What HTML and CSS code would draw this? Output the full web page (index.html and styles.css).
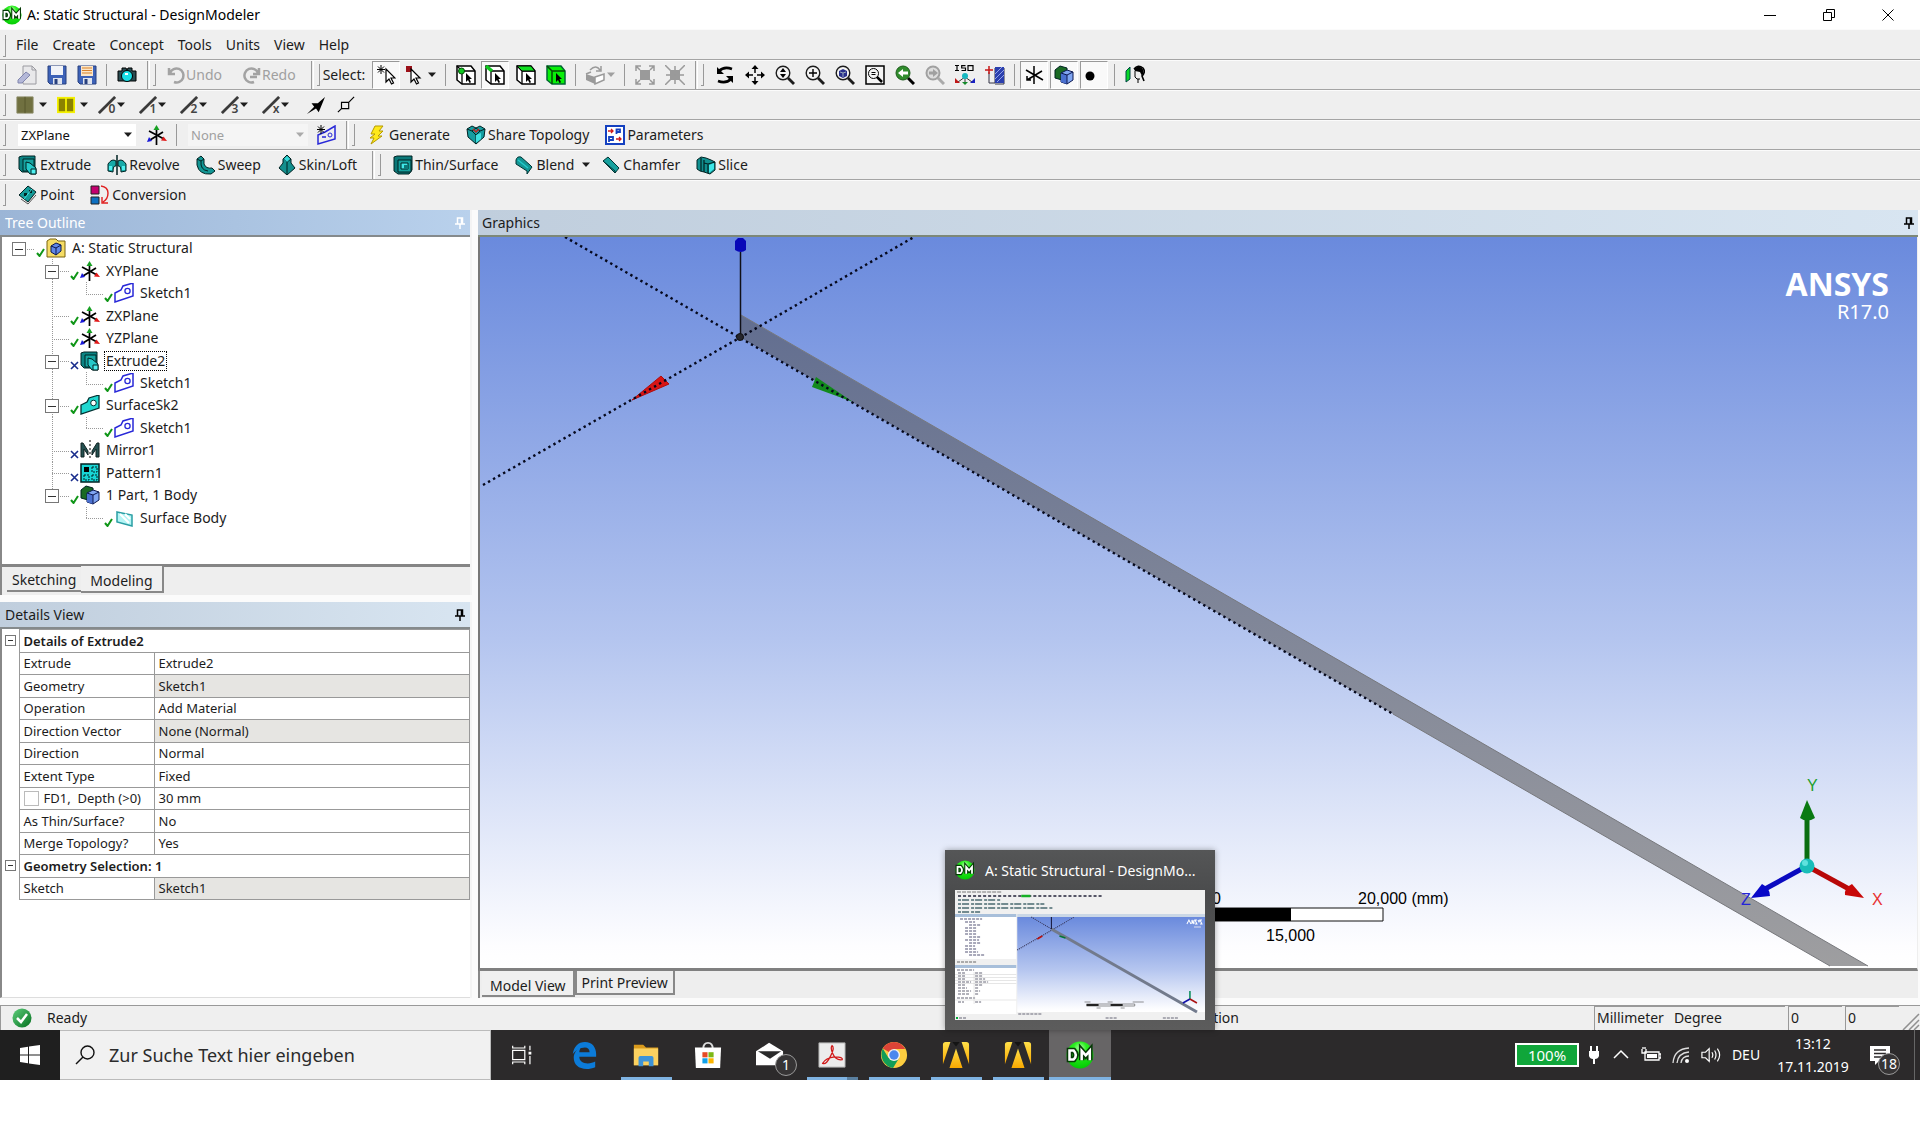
FILE: index.html
```html
<!DOCTYPE html>
<html lang="en">
<head>
<meta charset="utf-8">
<title>A: Static Structural - DesignModeler</title>
<link rel="stylesheet" href="styles.css">
</head>
<body>
<svg class="sprite" aria-hidden="true">
  <defs>
    <radialGradient id="gDm" cx=".5" cy=".25" r=".8"><stop offset="0" stop-color="#b9ffb0"/><stop offset=".3" stop-color="#2bee20"/><stop offset="1" stop-color="#00c800"/></radialGradient>
    <linearGradient id="gAns" x1="0" y1="0" x2="0" y2="1"><stop offset="0" stop-color="#ffe04a"/><stop offset="1" stop-color="#f9a800"/></linearGradient>
    <linearGradient id="gOk" x1="0" y1="0" x2="1" y2="1"><stop offset="0" stop-color="#5fce7c"/><stop offset="1" stop-color="#04701f"/></linearGradient>
    <linearGradient id="gView" x1="0" y1="0" x2="0" y2="1"><stop offset="0" stop-color="#6a8add"/><stop offset=".55" stop-color="#b4c5ef"/><stop offset=".97" stop-color="#fdfdff"/><stop offset="1" stop-color="#fff"/></linearGradient>
    <linearGradient id="gPlate" x1="0" y1="0" x2="0" y2="1"><stop offset="0" stop-color="#626e90"/><stop offset=".4" stop-color="#7c8397"/><stop offset="1" stop-color="#9e9ea0"/></linearGradient>
  </defs>
  <symbol id="dm" viewBox="0 0 20 20"><circle cx="10" cy="10" r="9.600" fill="url(#gDm)"/><path d="M2.500 6.800h3q3 3.200 0 6.400h-3zM11.200 13.700V7l2.900 3.300L17 7v6.700" fill="none" stroke="#063a06" stroke-width="4"/><path d="M2.500 6.800h3q3 3.200 0 6.400h-3zM11.200 13.700V7l2.900 3.300L17 7v6.700" fill="none" stroke="#fff" stroke-width="1.800"/></symbol>
  <symbol id="caret" viewBox="0 0 10 6"><path d="M1 .5h8L5 5z" fill="currentColor"/></symbol>
  <symbol id="new" viewBox="0 0 20 20"><path d="M6 1h9l4 4v14H6z" fill="#e8e8ea" stroke="#9a9aa0"/><path d="M15 1v4h4" fill="none" stroke="#9a9aa0"/><path d="M1 15L9 7l4 3-8 8H1z" fill="#b4b8d8" stroke="#8186ae"/></symbol>
  <symbol id="save" viewBox="0 0 20 20"><path d="M1 1h18v18H3l-2-2z" fill="#3d62b8" stroke="#28407e"/><path d="M4 1h12v9H4z" fill="#f1f3f8"/><path d="M6 13h9v6H6z" fill="#dfe4ee"/><path d="M7.500 14h3v5h-3z" fill="#28407e"/></symbol>
  <symbol id="saveas" viewBox="0 0 20 20"><path d="M1 1h18v18H3l-2-2z" fill="#3d62b8" stroke="#28407e"/><path d="M4 1h12v10H4z" fill="#fbe6c8"/><path d="M5 3h10M5 5.500h10M5 8h10" stroke="#d9822b"/><path d="M6 13h9v6H6z" fill="#dfe4ee"/><path d="M7.500 14h3v5h-3z" fill="#28407e"/></symbol>
  <symbol id="camera" viewBox="0 0 20 20"><path d="M1 6h4V3h4l1 2 1-2h4v3h4v10H1z" fill="#2a4d52" stroke="#000"/><circle cx="10" cy="11" r="5.500" fill="#19dfe6" stroke="#000"/><path d="M8 9h3" stroke="#fff" stroke-width="2"/></symbol>
  <symbol id="undo" viewBox="0 0 20 20"><path d="M3 3v6h6M4 8a7 7 0 1 1 4 9" fill="none" stroke="#a3a3a3" stroke-width="2.500"/></symbol>
  <symbol id="redo" viewBox="0 0 20 20"><path d="M17 3v6h-6M16 8a7 7 0 1 0-4 9M8 12h7" fill="none" stroke="#a3a3a3" stroke-width="2.500"/></symbol>
  <symbol id="pick" viewBox="0 0 20 20"><path d="M5 0v9M1 4.500h8M2 1.500l6 6M8 1.500l-6 6" stroke="#000"/><path d="M10 4v13l3-3 2.500 5 2-1-2.500-5h4z" fill="#fff" stroke="#000" stroke-width="1.200"/></symbol>
  <symbol id="pickbox" viewBox="0 0 20 20"><path d="M0 1h6v6H0z" fill="#9b1018"/><path d="M5 4v13l3-3 2.500 5 2-1-2.500-5h4z" fill="#fff" stroke="#000" stroke-width="1.200"/></symbol>
  <symbol id="cubeout" viewBox="0 0 20 20"><path d="M1 1h14l4 5v13H6l-5-4z" fill="#fff" stroke="#000" stroke-width="1.500"/><path d="M6 6h13M6 6v13M1 1l5 5" fill="none" stroke="#000" stroke-width="1.300"/><path d="M10 8v9l2-2 1.500 3 1.500-.7L13.500 14H16z"/></symbol>
  <symbol id="selpt" viewBox="0 0 20 20"><use href="#cubeout"/><circle cx="5.500" cy="6" r="3" fill="#10c820" stroke="#044a08"/></symbol>
  <symbol id="seledge" viewBox="0 0 20 20"><use href="#cubeout"/><path d="M1 1l6 5" stroke="#10c820" stroke-width="3.500"/></symbol>
  <symbol id="selface" viewBox="0 0 20 20"><use href="#cubeout"/><path d="M1 1h14l4 5H6z" fill="#10e020" stroke="#000"/></symbol>
  <symbol id="selbody" viewBox="0 0 20 20"><path d="M1 1h14l4 5v13H6l-5-4z" fill="#08f008" stroke="#063" stroke-width="1.500"/><path d="M6 6h13M6 6v13M1 1l5 5" stroke="#064a06" stroke-width="1.500" fill="none"/><path d="M10 8v9l2-2 1.500 3 1.500-.7L13.500 14H16z"/></symbol>
  <symbol id="graybox" viewBox="0 0 20 20"><path d="M1 9l9 3v7l-9-4z" fill="#9a9a9a"/><path d="M10 12l9-3v6l-9 4zM1 9l5-2" fill="#fff" stroke="#9a9a9a" stroke-width="1.500"/><path d="M5 5q6-6 10 0M16 1v5h-5" fill="none" stroke="#9a9a9a" stroke-width="1.500"/></symbol>
  <symbol id="expandsel" viewBox="0 0 20 20"><path d="M5 5h10v10H5z" fill="#9a9a9a"/><path d="M1 6V1h5M14 1h5v5M19 14v5h-5M6 19H1v-5M1 1l4 4M19 1l-4 4M1 19l4-4M19 19l-4-4" fill="none" stroke="#9a9a9a" stroke-width="1.500"/></symbol>
  <symbol id="shrinksel" viewBox="0 0 20 20"><path d="M5 5h10v10H5z" fill="#9a9a9a"/><path d="M0 0l6 6M20 0l-6 6M0 20l6-6M20 20l-6-6M10 1v18M1 10h18" stroke="#9a9a9a" stroke-width="1.500"/></symbol>
  <symbol id="rotate" viewBox="0 0 20 20"><path d="M4 6q5-5 13-2M16 14q-5 5-13 2" fill="none" stroke="#000" stroke-width="2.600"/><path d="M2 2v7h7zM18 18v-7h-7z"/></symbol>
  <symbol id="pan" viewBox="0 0 20 20"><path d="M10 3v14M3 10h14" stroke="#000" stroke-width="1.500" stroke-dasharray="5 4"/><path d="M10 0l3.500 4h-7zM10 20l3.500-4h-7zM0 10l4-3.500v7zM20 10l-4-3.500v7z"/></symbol>
  <symbol id="lens" viewBox="0 0 20 20"><path d="M13 13l6 6" stroke="currentColor" stroke-width="2.800"/><circle cx="8" cy="8" r="6.800" fill="#f4f4f4" stroke="currentColor" stroke-width="1.400"/></symbol>
  <symbol id="zoomv" viewBox="0 0 20 20"><use href="#lens"/><path d="M8 3l3 4H5zM8 13l3-4H5z"/></symbol>
  <symbol id="zoomp" viewBox="0 0 20 20"><use href="#lens"/><path d="M8 4v8M4 8h8" stroke="#000" stroke-width="1.400"/></symbol>
  <symbol id="zoomfit" viewBox="0 0 20 20"><use href="#lens"/><path d="M4 6l4-2 4 2v5l-4 2-4-2z" fill="#28308c"/><path d="M8 8v4M5 7l3 1 3-1" stroke="#9ab" fill="none"/></symbol>
  <symbol id="zoombox" viewBox="0 0 20 20"><path d="M1 1h18v18H1z" fill="#f4f4f4" stroke="#000" stroke-width="1.500"/><path d="M12 12l5 5" stroke="#000" stroke-width="2.500"/><circle cx="8.500" cy="8.500" r="5" fill="none" stroke="#000"/><path d="M6.500 7.500h4M6.500 9.500h4" stroke="#000"/></symbol>
  <symbol id="zback" viewBox="0 0 20 20"><path d="M13 13l6 6" stroke="#000" stroke-width="3"/><circle cx="8" cy="8" r="7" fill="#2f8c2c" stroke="#1d5c1b"/><path d="M3 8l5-4v2.500h5v3H8V12z" fill="#fff"/></symbol>
  <symbol id="zfwd" viewBox="0 0 20 20"><path d="M13 13l6 6" stroke="#aaa" stroke-width="3"/><circle cx="8" cy="8" r="6.500" fill="#ddd" stroke="#a0a0a0" stroke-width="2"/><path d="M13 8L8 4v2.500H4v3h4V12z" fill="#a0a0a0"/></symbol>
  <symbol id="iso" viewBox="0 0 20 20"><path d="M2 0v6M0 .5h4M0 5.500h4M10.500 .700H6.700v2.300h3.800v2.500H6.500M13 .700h5v4.800h-5z" fill="none" stroke="#000" stroke-width="1.200"/><path d="M10 12L3 17M10 12l7 5M10 12v7" stroke="#333"/><circle cx="10" cy="11" r="3" fill="#18b8c0"/><path d="M0 13l5 5H0z" fill="#c01818"/><path d="M20 13l-5 5h5z" fill="#1820c0"/><path d="M7 17h6l-3 3z" fill="#138a2a"/></symbol>
  <symbol id="lookat" viewBox="0 0 20 20"><path d="M4 7v11h6V3h9v16h-9" fill="none" stroke="#334"/><path d="M10 2h9v16h-9z" fill="#2b3fae"/><path d="M10 9l7-7M10 14l9-9M12 17l7-7" stroke="#94a3ea"/><path d="M0 5h8M4 1v8" stroke="#c81818" stroke-width="1.500"/></symbol>
  <symbol id="axes" viewBox="0 0 20 20"><path d="M10 1v18M2 5l17 10M18 6L3 15M3 11v4h4" fill="none" stroke="#000" stroke-width="1.500"/></symbol>
  <symbol id="bodies" viewBox="0 0 20 20"><path d="M1 5l5-4 7 2v9l-5 3-7-2z" fill="#1a6a24" stroke="#022"/><path d="M7 8l6-3 6 2v8l-6 4-6-2z" fill="#7fa5f2" stroke="#0c1850"/><path d="M7 8l6 2v9l-6-2z" fill="#4a70d0"/><path d="M7 8l6 2 6-3M13 10v9" fill="none" stroke="#0c1850"/></symbol>
  <symbol id="dot" viewBox="0 0 20 20"><circle cx="6" cy="11" r="4.500"/></symbol>
  <symbol id="face" viewBox="0 0 20 20"><path d="M1 6l4-4v12l-4 3z" fill="#08d828" stroke="#044"/><path d="M9 4q4-5 9-1 3 4-1 8l2 5" fill="none" stroke="#000" stroke-width="1.600"/><path d="M9 4q4-4 8-1 3 3 0 8l-2-4-5-1z"/><path d="M10 6v6l2 2h3M13 14v4" fill="none" stroke="#000"/></symbol>
  <symbol id="olive" viewBox="0 0 20 20"><path d="M1 1h18v18H1z" fill="#707040" stroke="#8b8b68"/><path d="M10 1v18" stroke="#55552a"/></symbol>
  <symbol id="yellow" viewBox="0 0 20 20"><path d="M0 1h20v18H0z" fill="#f4f000"/><path d="M2 3h7v14H2zM11 3h7v14h-7z" fill="#8b8200"/></symbol>
  <symbol id="slash" viewBox="0 0 20 20"><path d="M1 19L19 1" stroke="#3a3a3a" stroke-width="3"/></symbol>
  <symbol id="thickarrow" viewBox="0 0 20 20"><path d="M0 20L8 12l-3-4 7 0 8-7-7 17-3-4z"/></symbol>
  <symbol id="node" viewBox="0 0 20 20"><path d="M5 7h8v7H5zM13 7l6-6M5 14l-4 4" fill="none" stroke="#000" stroke-width="1.300"/></symbol>
  <symbol id="triad" viewBox="0 0 20 20"><path d="M9.500 3v17M2 6l15 8M16 7L3 15" stroke="#000" stroke-width="1.700"/><path d="M9.500 0l3 5h-6z" fill="#16a022"/><path d="M20 16l-6-.5 2.500-4z" fill="#e01818"/><path d="M0 17l2-5 3 4z" fill="#1818d8"/></symbol>
  <symbol id="sketch" viewBox="0 0 20 20"><path d="M1 10l6-3 2-4 10-3v13L1 19z" fill="none" stroke="#2828d8" stroke-width="1.500"/><circle cx="13.500" cy="8" r="2.600" fill="none" stroke="#2828d8" stroke-width="1.300"/></symbol>
  <symbol id="newsketch" viewBox="0 0 20 20"><path d="M2 10l7-3 10-6v13L2 19zM6 12h4" fill="none" stroke="#2828d8" stroke-width="1.500"/><circle cx="14" cy="10" r="2" fill="none" stroke="#2828d8"/><path d="M5 0v9M1 4.500h8M2 1.500l6 6M8 1.500l-6 6" stroke="#000"/></symbol>
  <symbol id="bolt" viewBox="0 0 20 20"><path d="M8 1h8l-4 5h4l-5 5h4L4 19l3-6H3l5-4H4z" fill="#ffe91a" stroke="#b59a00"/></symbol>
  <symbol id="share" viewBox="0 0 20 20"><path d="M1 4l5-3 4 2 4-2 5 3-1 8-8 7-8-7z" fill="#169da0" stroke="#022"/><path d="M1 4l5 2 4-3 4 3 5-2M6 6l4 4 4-4M10 10v9" fill="none" stroke="#022"/><path d="M7 4l3 3 3-3" stroke="#c62020" stroke-width="1.500" fill="none"/><path d="M10 10l5-2v6l-5 4z" fill="#3fe0e0"/></symbol>
  <symbol id="params" viewBox="0 0 20 20"><path d="M1 1h18v18H1z" fill="#fff" stroke="#1440c0" stroke-width="2"/><path d="M11.500 9V4.500H15V7h-3.500M4 17v-5h4v3H4" fill="none" stroke="#1440c0" stroke-width="1.800"/><path d="M3 6h5M6 4l2 2-2 2M11 14h5M14 12l2 2-2 2" fill="none" stroke="#d01818" stroke-width="1.300"/></symbol>
  <symbol id="extrude" viewBox="0 0 20 20"><path d="M1 2l3-1h13v12l-2 4H4l-3-3z" fill="#0b8383" stroke="#022"/><path d="M5 4h11v12H5z" fill="#16a3a0" stroke="#022"/><path d="M8 7l4 1 6 5v6h-6l-4-5z" fill="#25c9c9" stroke="#022"/><path d="M13 14h5v5h-5z" fill="#4ff0f0" stroke="#022"/></symbol>
  <symbol id="revolve" viewBox="0 0 20 20"><path d="M1 9q4-6 8-3v5q-3-1-3 6l-5-1zM19 9q-4-6-8-3v5q3-1 3 6l5-1z" fill="#17aaa8" stroke="#022"/><path d="M10 0v20" stroke="#022" stroke-width="1.500"/><path d="M2 11h3v4H2zM15 11h3v4h-3z" fill="#4ff0f0"/></symbol>
  <symbol id="sweep" viewBox="0 0 20 20"><path d="M1 4l4-3 3 3v5q2 5 8 4l3 3-4 3Q3 20 1 10z" fill="#129694" stroke="#022"/><path d="M1 4l4 2 3-2M5 6q-1 9 7 10" fill="none" stroke="#022"/></symbol>
  <symbol id="loft" viewBox="0 0 20 20"><path d="M10 0l4 4v4l4 5-8 7-8-7 4-5V4z" fill="#138f8d" stroke="#022"/><path d="M7 4l3 3 4-3M10 7v13" fill="none" stroke="#022"/><path d="M7 4l3-3 3 3-3 3z" fill="#35d8d8"/></symbol>
  <symbol id="thin" viewBox="0 0 20 20"><path d="M1 2l3-1h15v14l-3 4H5l-4-3z" fill="#0b7878" stroke="#022"/><path d="M5 5h13v12H5z" fill="#14a09d" stroke="#022"/><path d="M8 8h7v6H8z" fill="#3fe8e8" stroke="#022"/><path d="M11 10h4v4h-4z" fill="#0b7878"/></symbol>
  <symbol id="blend" viewBox="0 0 20 20"><path d="M2 5q1-4 5-3l9 8 2 2-5 7v-3L2 9z" fill="#129694" stroke="#033"/><path d="M4 5l10 8" stroke="#2cc" stroke-width="1.500"/></symbol>
  <symbol id="chamfer" viewBox="0 0 20 20"><path d="M2 6l5-4 11 11-4 5z" fill="#17a19e" stroke="#033"/><path d="M2 6l12 10v2" fill="none" stroke="#033"/></symbol>
  <symbol id="slice" viewBox="0 0 20 20"><path d="M1 5l4-3 5 1 5 2 4 2v8l-5 4-6-2-4-1-3-2z" fill="#109090" stroke="#022"/><path d="M5 3v13M8 5v12M12 9v9M8 8l4 1 7-2" fill="none" stroke="#022" stroke-width="1.200"/><path d="M13 10l5-2v6l-5 4z" fill="#3fe8e8"/></symbol>
  <symbol id="point" viewBox="0 0 20 20"><path d="M1 10l9-9 8 6-8 10z" fill="#149a98" stroke="#022"/><path d="M3 14l7 5 8-9" fill="none" stroke="#555"/><path d="M6 8h3v3H6zM11 5h3v3h-3z" fill="#022"/><path d="M6 14l8-10" stroke="#3fe8e8"/></symbol>
  <symbol id="convert" viewBox="0 0 20 20"><path d="M1 1h8v8H1z" fill="#c3006f" stroke="#222"/><path d="M1 12h8v7H1z" fill="#0c6fc0" stroke="#222"/><path d="M11 1q7 1 7 7 0 6-5 9M12 12v6h6" fill="none" stroke="#e02020" stroke-width="1.400"/></symbol>
  <symbol id="folder" viewBox="0 0 20 20"><path d="M1 3l3-2h6l2 2h7v16H1z" fill="#f5dc65" stroke="#7a6410"/><path d="M5 8l5-3 5 2v6l-5 4-5-3z" fill="#5f86e8" stroke="#0c1850"/><path d="M5 8l5 2 5-3M10 10v7" fill="none" stroke="#0c1850"/></symbol>
  <symbol id="surfsk" viewBox="0 0 20 20"><path d="M1 10l6-3 2-4 10-3v13L1 19z" fill="#20d8d0" stroke="#033" stroke-width="1.300"/><circle cx="13.500" cy="8" r="2.800" fill="#fff" stroke="#033"/></symbol>
  <symbol id="mirror" viewBox="0 0 20 20"><path d="M1 17V3h2l5 8v4l-4-6v8zM19 17V3h-2l-5 8v4l4-6v8z" fill="#245050" stroke="#122"/><path d="M10 0v20" stroke="#000" stroke-dasharray="2 2"/></symbol>
  <symbol id="pattern" viewBox="0 0 20 20"><path d="M1 1h18v18H1z" fill="#18d6d6" stroke="#022" stroke-width="1.500"/><path d="M4 4h5v5H4z"/><path d="M12 4h5v5h-5zM4 12h5v5H4zM12 12h5v5h-5z" fill="none" stroke="#022" stroke-dasharray="2 1"/></symbol>
  <symbol id="surfbody" viewBox="0 0 20 20"><path d="M3 4l15 3v11L3 14z" fill="#b5f5f5" stroke="#2a9ea4" stroke-width="1.500"/><path d="M6 6l9 9M11 6l5 5" stroke="#fff" stroke-width="2"/></symbol>
  <symbol id="ok" viewBox="0 0 9 9"><path d="M1 5l2.500 3L8 1" fill="none" stroke="#109618" stroke-width="2"/></symbol>
  <symbol id="no" viewBox="0 0 9 9"><path d="M1 1l7 7M8 1L1 8" stroke="#182c8c" stroke-width="1.600"/></symbol>
  <symbol id="pin" viewBox="0 0 10 12"><path d="M2.500 1h5v6h-5zM0 7h10M5 7v5M6.500 1v6" fill="none" stroke="currentColor" stroke-width="1.500"/></symbol>
  <symbol id="ansys" viewBox="0 0 30 30"><path d="M4 1h5L1 25V4q0-3 3-3zM26 1h-5l8 24V4q0-3-3-3z" fill="url(#gAns)"/><path d="M15 8l7 21H8z" fill="url(#gAns)"/><path d="M11 1h8l-4 5zM11 1L3 29" fill="#141414"/></symbol>
</svg>

<header class="titlebar">
  <svg class="i20"><use href="#dm"/></svg>
  <h1>A: Static Structural - DesignModeler</h1>
  <div class="winbtns">
    <button aria-label="Minimize"><svg viewBox="0 0 12 12"><path d="M0 6.500h12"/></svg></button>
    <button aria-label="Restore"><svg viewBox="0 0 12 12"><path d="M.5 3.500h8v8h-8zM3.500 3V.5h8v8H9"/></svg></button>
    <button aria-label="Close"><svg viewBox="0 0 12 12"><path d="M.5.5l11 11M11.500.5l-11 11"/></svg></button>
  </div>
</header>

<nav class="bar menu"><i class="grip"></i>
  <button>File</button><button>Create</button><button>Concept</button><button>Tools</button><button>Units</button><button>View</button><button>Help</button>
</nav>

<div class="bar">
  <div class="group"><i class="grip"></i>
    <button class="t" aria-label="New"><svg class="i20"><use href="#new"/></svg></button>
    <button class="t" aria-label="Save"><svg class="i20"><use href="#save"/></svg></button>
    <button class="t" aria-label="Save as"><svg class="i20"><use href="#saveas"/></svg></button>
    <i class="sep"></i>
    <button class="t" aria-label="Capture"><svg class="i20"><use href="#camera"/></svg></button>
  </div>
  <div class="group"><i class="grip"></i>
    <div class="labels undo">
      <button class="l" disabled><svg class="i20"><use href="#undo"/></svg>Undo</button>
      <button class="l" disabled><svg class="i20"><use href="#redo"/></svg>Redo</button>
    </div>
  </div>
  <div class="group"><i class="grip"></i>
    <span class="caption">Select:</span>
    <button class="t on" aria-label="New selection"><svg class="i20"><use href="#pick"/></svg></button>
    <button class="t wide" aria-label="Select mode"><svg class="i20"><use href="#pickbox"/></svg><svg class="caret"><use href="#caret"/></svg></button>
    <i class="sep"></i>
    <button class="t" aria-label="Points"><svg class="i20"><use href="#selpt"/></svg></button>
    <button class="t on" aria-label="Edges"><svg class="i20"><use href="#seledge"/></svg></button>
    <button class="t" aria-label="Faces"><svg class="i20"><use href="#selface"/></svg></button>
    <button class="t" aria-label="Bodies"><svg class="i20"><use href="#selbody"/></svg></button>
    <i class="sep"></i>
    <button class="t wide" disabled aria-label="Extend selection"><svg class="i20"><use href="#graybox"/></svg><svg class="caret"><use href="#caret"/></svg></button>
    <i class="sep"></i>
    <button class="t" disabled aria-label="Expand face selection"><svg class="i20"><use href="#expandsel"/></svg></button>
    <button class="t" disabled aria-label="Shrink face selection"><svg class="i20"><use href="#shrinksel"/></svg></button>
  </div>
  <div class="group open"><i class="grip"></i>
    <button class="t" aria-label="Rotate"><svg class="i20"><use href="#rotate"/></svg></button>
    <button class="t" aria-label="Pan"><svg class="i20"><use href="#pan"/></svg></button>
    <button class="t" aria-label="Zoom"><svg class="i20"><use href="#zoomv"/></svg></button>
    <button class="t" aria-label="Box zoom"><svg class="i20"><use href="#zoomp"/></svg></button>
    <button class="t" aria-label="Zoom to fit"><svg class="i20"><use href="#zoomfit"/></svg></button>
    <button class="t" aria-label="Magnifier"><svg class="i20"><use href="#zoombox"/></svg></button>
    <button class="t" aria-label="Previous view"><svg class="i20"><use href="#zback"/></svg></button>
    <button class="t" disabled aria-label="Next view"><svg class="i20"><use href="#zfwd"/></svg></button>
    <button class="t" aria-label="Isometric view"><svg class="i20"><use href="#iso"/></svg></button>
    <button class="t" aria-label="Look at"><svg class="i20"><use href="#lookat"/></svg></button>
    <i class="sep"></i>
    <button class="t on" aria-label="Display plane"><svg class="i20"><use href="#axes"/></svg></button>
    <button class="t on" aria-label="Display model"><svg class="i20"><use href="#bodies"/></svg></button>
    <button class="t on" aria-label="Display points"><svg class="i20"><use href="#dot"/></svg></button>
    <i class="sep"></i>
    <button class="t" aria-label="Look at face"><svg class="i20"><use href="#face"/></svg></button>
  </div>
</div>

<div class="bar edges"><i class="grip"></i>
  <button class="d" aria-label="Face colour"><svg class="i18"><use href="#olive"/></svg><svg class="caret"><use href="#caret"/></svg></button>
  <button class="d" aria-label="Edge colour"><svg class="i18"><use href="#yellow"/></svg><svg class="caret"><use href="#caret"/></svg></button>
  <button class="d"><svg class="i18"><use href="#slash"/></svg><b>0</b><svg class="caret"><use href="#caret"/></svg></button>
  <button class="d"><svg class="i18"><use href="#slash"/></svg><b>1</b><svg class="caret"><use href="#caret"/></svg></button>
  <button class="d"><svg class="i18"><use href="#slash"/></svg><b>2</b><svg class="caret"><use href="#caret"/></svg></button>
  <button class="d"><svg class="i18"><use href="#slash"/></svg><b>3</b><svg class="caret"><use href="#caret"/></svg></button>
  <button class="d"><svg class="i18"><use href="#slash"/></svg><b>x</b><svg class="caret"><use href="#caret"/></svg></button>
  <button class="t" aria-label="Edge direction"><svg class="i18"><use href="#thickarrow"/></svg></button>
  <button class="t" aria-label="Vertices"><svg class="i18"><use href="#node"/></svg></button>
</div>

<div class="bar">
  <div class="group plane"><i class="grip"></i>
    <label class="combo"><select aria-label="Active plane"><option>ZXPlane</option></select><svg class="caret"><use href="#caret"/></svg></label>
    <button class="t" aria-label="New plane"><svg class="i20"><use href="#triad"/></svg></button>
    <i class="sep"></i>
    <label class="combo off"><select aria-label="Active sketch" disabled><option>None</option></select><svg class="caret"><use href="#caret"/></svg></label>
    <button class="t" aria-label="New sketch"><svg class="i20"><use href="#newsketch"/></svg></button>
  </div>
  <div class="group open"><i class="grip"></i>
    <div class="labels">
      <button class="l"><svg class="i20"><use href="#bolt"/></svg>Generate</button>
      <button class="l"><svg class="i20"><use href="#share"/></svg>Share Topology</button>
      <button class="l"><svg class="i20"><use href="#params"/></svg>Parameters</button>
    </div>
  </div>
</div>

<div class="bar">
  <div class="group"><i class="grip"></i>
    <div class="labels">
      <button class="l"><svg class="i20"><use href="#extrude"/></svg>Extrude</button>
      <button class="l"><svg class="i20"><use href="#revolve"/></svg>Revolve</button>
      <button class="l"><svg class="i20"><use href="#sweep"/></svg>Sweep</button>
      <button class="l"><svg class="i20"><use href="#loft"/></svg>Skin/Loft</button>
    </div>
  </div>
  <div class="group open"><i class="grip"></i>
    <div class="labels">
      <button class="l"><svg class="i20"><use href="#thin"/></svg>Thin/Surface</button>
      <button class="l blend"><svg class="i20"><use href="#blend"/></svg>Blend<svg class="caret"><use href="#caret"/></svg></button>
      <button class="l"><svg class="i20"><use href="#chamfer"/></svg>Chamfer</button>
      <button class="l"><svg class="i20"><use href="#slice"/></svg>Slice</button>
    </div>
  </div>
</div>

<div class="bar last">
  <div class="group open"><i class="grip"></i>
    <div class="labels">
      <button class="l"><svg class="i20"><use href="#point"/></svg>Point</button>
      <button class="l"><svg class="i20"><use href="#convert"/></svg>Conversion</button>
    </div>
  </div>
</div>

<main class="work">
  <div class="side">
    <section class="outline">
      <h2 class="head active">Tree Outline<svg class="pin"><use href="#pin"/></svg></h2>
      <ul class="tree">
        <li><span class="twig root"><button class="pm" aria-label="Collapse"></button></span><svg class="st"><use href="#ok"/></svg><svg class="i20"><use href="#folder"/></svg><span class="nm">A: Static Structural</span></li>
        <li class="n1"><span class="twig"><button class="pm" aria-label="Collapse"></button></span><svg class="st"><use href="#ok"/></svg><svg class="i20"><use href="#triad"/></svg><span class="nm">XYPlane</span></li>
        <li class="n1"><span class="rail"></span><span class="twig end"></span><svg class="st"><use href="#ok"/></svg><svg class="i20"><use href="#sketch"/></svg><span class="nm">Sketch1</span></li>
        <li class="n1"><span class="twig"></span><svg class="st"><use href="#ok"/></svg><svg class="i20"><use href="#triad"/></svg><span class="nm">ZXPlane</span></li>
        <li class="n1"><span class="twig"></span><svg class="st"><use href="#ok"/></svg><svg class="i20"><use href="#triad"/></svg><span class="nm">YZPlane</span></li>
        <li class="n1"><span class="twig"><button class="pm" aria-label="Collapse"></button></span><svg class="st"><use href="#no"/></svg><svg class="i20"><use href="#extrude"/></svg><span class="nm sel">Extrude2</span></li>
        <li class="n1"><span class="rail"></span><span class="twig end"></span><svg class="st"><use href="#ok"/></svg><svg class="i20"><use href="#sketch"/></svg><span class="nm">Sketch1</span></li>
        <li class="n1"><span class="twig"><button class="pm" aria-label="Collapse"></button></span><svg class="st"><use href="#ok"/></svg><svg class="i20"><use href="#surfsk"/></svg><span class="nm">SurfaceSk2</span></li>
        <li class="n1"><span class="rail"></span><span class="twig end"></span><svg class="st"><use href="#ok"/></svg><svg class="i20"><use href="#sketch"/></svg><span class="nm">Sketch1</span></li>
        <li class="n1"><span class="twig"></span><svg class="st"><use href="#no"/></svg><svg class="i20"><use href="#mirror"/></svg><span class="nm">Mirror1</span></li>
        <li class="n1"><span class="twig"></span><svg class="st"><use href="#no"/></svg><svg class="i20"><use href="#pattern"/></svg><span class="nm">Pattern1</span></li>
        <li class="n1"><span class="twig end"><button class="pm" aria-label="Collapse"></button></span><svg class="st"><use href="#ok"/></svg><svg class="i20"><use href="#bodies"/></svg><span class="nm">1 Part, 1 Body</span></li>
        <li class="n1"><span class="rail none"></span><span class="twig end"></span><svg class="st"><use href="#ok"/></svg><svg class="i20"><use href="#surfbody"/></svg><span class="nm">Surface Body</span></li>
      </ul>
      <div class="tabs"><button>Sketching</button><button class="cur">Modeling</button></div>
    </section>
    <section class="details">
      <h2 class="head">Details View<svg class="pin"><use href="#pin"/></svg></h2>
      <div class="sheet">
        <table>
          <colgroup><col class="c0"><col class="c1"><col></colgroup>
          <tbody>
            <tr><td><button class="pm sm" aria-label="Collapse"></button></td><th colspan="2" class="sec">Details of Extrude2</th></tr>
            <tr><td></td><th>Extrude</th><td>Extrude2</td></tr>
            <tr><td></td><th>Geometry</th><td class="ro">Sketch1</td></tr>
            <tr><td></td><th>Operation</th><td>Add Material</td></tr>
            <tr><td></td><th>Direction Vector</th><td class="ro">None (Normal)</td></tr>
            <tr><td></td><th>Direction</th><td>Normal</td></tr>
            <tr><td></td><th>Extent Type</th><td>Fixed</td></tr>
            <tr><td></td><th><label class="fd"><input type="checkbox">FD1,&nbsp; Depth (&gt;0)</label></th><td>30 mm</td></tr>
            <tr><td></td><th>As Thin/Surface?</th><td>No</td></tr>
            <tr><td></td><th>Merge Topology?</th><td>Yes</td></tr>
            <tr><td><button class="pm sm" aria-label="Collapse"></button></td><th colspan="2" class="sec">Geometry Selection: 1</th></tr>
            <tr><td></td><th>Sketch</th><td class="ro">Sketch1</td></tr>
          </tbody>
        </table>
      </div>
    </section>
  </div>

  <section class="graphics">
    <h2 class="head">Graphics<svg class="pin"><use href="#pin"/></svg></h2>
    <div class="canvas">
      <svg viewBox="480 237 1437 731" preserveAspectRatio="xMaxYMin slice" role="img" aria-label="Surface body on the ZX plane">
        <rect x="480" y="237" width="1437" height="731" fill="url(#gView)"/>
        <path d="M741 315L1868 966h-38L741 338z" fill="url(#gPlate)"/>
        <path d="M741 315L1868 966M1393 714L1830 966" stroke="#77787c" fill="none"/>
        <path d="M632 400l29-24 8 8z" fill="#d81414" stroke="#b00c0c"/>
        <path d="M853 402l-37-25-4 10z" fill="#128a1c"/>
        <path d="M565 237L1393 714M483 485L741 337 914 237" fill="none" stroke="#05081c" stroke-width="2.400" stroke-dasharray="2.400 3.400"/>
        <path d="M740.500 252v85" stroke="#101018" stroke-width="1.500"/>
        <path d="M735 241l3-3h5l3 3v9q-5 4-11 0z" fill="#0808b8"/>
        <circle cx="740" cy="337" r="3.500" fill="#26262c" stroke="#111"/>
        <g class="brand"><text x="1889" y="296" class="brand1">ANSYS</text><text x="1889" y="319" class="brand2">R17.0</text></g>
        <path d="M1015 908h368v13h-368z" fill="#fff" stroke="#111"/>
        <path d="M1015 908h92v13h-92zM1199 908h92v13h-92z" fill="#000"/>
        <g class="ruler"><text x="1172" y="904">10,000</text><text x="1358" y="904">20,000 (mm)</text><text x="1266" y="941">15,000</text></g>
        <path d="M1807 866V816" stroke="#0a6e10" stroke-width="5"/><path d="M1807 800l8 18q-8 5-15 0z" fill="#0a7a12"/>
        <path d="M1807 866l-42 23" stroke="#0a0ac0" stroke-width="5"/><path d="M1751 898l11-14q8 4 8 12z" fill="#0808c8"/>
        <path d="M1807 866l42 23" stroke="#b80808" stroke-width="5"/><path d="M1864 898l-12-14q-8 4-7 11z" fill="#c80808"/>
        <circle cx="1807" cy="866" r="7.500" fill="#19bdb9"/><circle cx="1805" cy="863" r="3" fill="#5fe2de"/>
        <g class="ruler"><text x="1807" y="791" fill="#1c9e2c">Y</text><text x="1872" y="905" fill="#e83030">X</text><text x="1741" y="905" fill="#2424d8">Z</text></g>
      </svg>
    </div>
    <div class="tabs view"><button class="cur">Model View</button><button>Print Preview</button></div>
  </section>
</main>

<footer class="status">
  <svg class="i20" viewBox="0 0 20 20"><circle cx="10" cy="10" r="9.500" fill="url(#gOk)"/><path d="M5 10l4 4 6-8" fill="none" stroke="#fff" stroke-width="2.500"/></svg>
  <span class="ready">Ready</span>
  <span class="picked">No Selection</span>
  <span class="cell units"><span>Millimeter</span><span>Degree</span></span>
  <span class="cell">0</span>
  <span class="cell">0</span>
  <svg class="size" viewBox="0 0 18 18"><path d="M1 18L17 2M7 18L17 8M12 18l5-5" stroke="#909090" stroke-width="1.500"/></svg>
</footer>

<div class="taskbar">
  <button class="start" aria-label="Start"><svg viewBox="0 0 20 20"><path d="M0 3l8-1.200V9.500H0zM9 1.600L20 0v9.500H9zM0 10.500h8v7.700L0 17zM9 10.500h11V20L9 18.400z" fill="#fff"/></svg></button>
  <label class="search"><svg viewBox="0 0 20 20"><circle cx="12.500" cy="7.500" r="6.500" fill="none" stroke="#111" stroke-width="1.400"/><path d="M8 12L1 19" stroke="#111" stroke-width="1.400"/></svg><input type="text" placeholder="Zur Suche Text hier eingeben" aria-label="Search"></label>
  <button class="app" aria-label="Task view"><svg viewBox="0 0 30 30"><path d="M5 10h13v10H5zM5 5v2.500h13V5M5 25v-2.500h13V25M23.500 5v5M23.500 16v9" fill="none" stroke="#fff" stroke-width="1.300"/><path d="M22 11.500h3v3h-3z" fill="#fff"/></svg></button>
  <button class="app" aria-label="Edge"><svg viewBox="0 0 30 30"><path d="M3 14C4 6 9 1 16 1c8 0 12 6 12 13v3H10c0 5 4 7 9 7 3 0 6-1 8-2v6c-3 1-6 2-9 2C9 30 4 25 4 18c0-5 3-9 8-11-1 1-2 3-2 5h11c0-3-2-5-5-5-5 0-10 3-13 7z" fill="#0c7bd8"/></svg></button>
  <button class="app run" aria-label="Explorer"><svg viewBox="0 0 30 30"><path d="M2 4h10l3 3h13v19H2z" fill="#d99a1c"/><path d="M2 8h26v18H2z" fill="#fbd160"/><path d="M7 27v-9q0-2 2-2h12q2 0 2 2v9h-5v-5h-6v5z" fill="#3d93d8"/></svg></button>
  <button class="app" aria-label="Store"><svg viewBox="0 0 30 30"><path d="M10 8q0-6 5-6t5 6" fill="none" stroke="#ddd" stroke-width="2"/><path d="M1 7h28l-1 22H2z" fill="#fff"/><path d="M9 12h5.500v5.500H9z" fill="#e64a24"/><path d="M15.500 12H21v5.500h-5.500z" fill="#7cb814"/><path d="M9 18.500h5.500V24H9z" fill="#10a0e8"/><path d="M15.500 18.500H21V24h-5.500z" fill="#fcb400"/></svg></button>
  <button class="app mail" aria-label="Mail"><svg viewBox="0 0 30 30"><path d="M0 11L14 2l15 9v15H0z" fill="#fff"/><path d="M2 11h25l-12 8z" fill="#2a2a2a"/></svg><b class="badge">1</b></button>
  <button class="app run split" aria-label="Acrobat"><svg viewBox="0 0 30 30"><path d="M1 2h28v26H1z" fill="#ececec" stroke="#aaa"/><path d="M15 5q-2 2 1 9 3 7 10 6 1-3-8-3-10 1-13 7 4 2 9-9 4-8 1-10z" fill="none" stroke="#d01818" stroke-width="1.400"/></svg></button>
  <button class="app run" aria-label="Chrome"><svg viewBox="0 0 30 30"><circle cx="15" cy="15" r="14" fill="#fccd40"/><path d="M15 15L3 8Q7 1 15 1t12 7.500H15z" fill="#dc4437"/><path d="M3 8q-3 6 0 13 4 7 11 8l6-10-11-1z" fill="#119d57"/><circle cx="15" cy="15" r="6.500" fill="#f1f1f1"/><circle cx="15" cy="15" r="5" fill="#4a87ee"/></svg></button>
  <button class="app run" aria-label="ANSYS Workbench"><svg><use href="#ansys"/></svg></button>
  <button class="app run" aria-label="ANSYS Workbench"><svg><use href="#ansys"/></svg></button>
  <div class="app run here">
    <button class="face" aria-label="DesignModeler"><svg><use href="#dm"/></svg></button>
    <div class="preview">
      <div class="ptitle"><svg class="i20"><use href="#dm"/></svg><span>A: Static Structural - DesignMo...</span></div>
      <svg class="thumb" viewBox="0 0 249 130" preserveAspectRatio="none">
        <path d="M0 0h249v130H0z" fill="#f0f0f0"/>
        <path d="M2 2h44" stroke="#777" stroke-dasharray="4 1"/>
        <path d="M3 6h145" stroke="#556" stroke-width="2" stroke-dasharray="3 2"/><path d="M66 6h9" stroke="#16b026" stroke-width="2.500"/>
        <path d="M3 10h42M3 14h86M3 18h94M3 22h22" stroke="#4a6a70" stroke-width="1.600" stroke-dasharray="3 1 7 2"/>
        <path d="M0 24h61v3H0zM0 75h61v3H0z" fill="#a8bfda"/><path d="M0 27h61v42H0zM0 78h61v46H0z" fill="#fff"/>
        <path d="M62 24h187v3H62z" fill="#cad7e6"/><path d="M62 27h187v95H62z" fill="url(#gView)"/>
        <path d="M5 29h22M10 32h10M14 35h12M10 38h11M10 41h11M10 44h12M14 47h12M10 50h14M14 53h12M10 56h10M10 59h11M10 62h13M14 65h15" stroke="#557" stroke-dasharray="3 1"/>
        <path d="M2 80h17M3 83h8M20 83h8M3 86h8M20 86h7M3 89h8M20 89h10M3 92h13M20 92h13M3 95h8M20 95h7M3 98h9M20 98h4M3 101h13M20 101h5M3 104h12M20 104h3M2 108h18M3 112h6M20 112h6" stroke="#667" stroke-dasharray="3 1"/>
        <path d="M19 82v32M0 84.500h61M0 87.500h61M0 90.500h61M0 93.500h61M0 110h61" stroke="#ccc" stroke-width=".5"/>
        <path d="M2 72h19" stroke="#666" stroke-dasharray="3 1"/><path d="M62 60L119 27M76 27l20 12" stroke="#335" stroke-dasharray="1 1"/>
        <path d="M96 39L241 122" stroke="#727a8c" stroke-width="3"/><path d="M96 27v12" stroke="#113"/><path d="M82 49l5-3" stroke="#b11" stroke-width="1.500"/><path d="M104 46l6 2" stroke="#073" stroke-width="1.500"/>
        <path d="M131 115h12M155 115h12" stroke="#000" stroke-width="2"/><path d="M131 114h48v2h-48M129 112h6M152 112h5M177 112h11M141 118h4M165 118h4" fill="none" stroke="#666" stroke-width=".7"/>
        <path d="M234 109v-8" stroke="#085" stroke-width="1.500"/><path d="M234 109l-7 4" stroke="#11a" stroke-width="1.500"/><path d="M234 109l7 4" stroke="#a11" stroke-width="1.500"/>
        <path d="M231 34l2-4 2 4M236 34v-4l2 4v-4M241 30h-2l2 4h-2M242 30l1 2 1-2M246 30h-2l2 4h-2" fill="none" stroke="#fff"/><path d="M238 37h7" stroke="#dde"/>
        <path d="M63 124h24M4 128h8M150 128h11M207 128h16" stroke="#667" stroke-dasharray="3 1"/><path d="M1 128h2" stroke="#0a3" stroke-width="2"/>
      </svg>
    </div>
  </div>
  <div class="tray">
    <span class="pct">100%</span>
    <svg class="plug" viewBox="0 0 12 20"><path d="M3 1v5M9 1v5" stroke="#fff" stroke-width="2"/><path d="M1 6h10v5q-1 3-4 3v5H5v-5q-3 0-4-3z" fill="#fff"/></svg>
    <svg viewBox="0 0 20 20"><path d="M3 13l7-7 7 7" fill="none" stroke="#fff" stroke-width="1.500"/></svg>
    <svg viewBox="0 0 20 20"><path d="M4 7h14v8H4zM18 9h2v4h-2M1 4v4h4V4M2 2v2M4 2v2" fill="none" stroke="#fff" stroke-width="1.300"/><path d="M6 9h10v4H6z" fill="#fff"/></svg>
    <svg viewBox="0 0 20 20"><path d="M2 18Q3 4 18 3M6 18Q7 8 18 7M10 18q1-7 8-7" fill="none" stroke="#ddd" stroke-width="1.300"/><circle cx="16" cy="16" r="2" fill="#fff"/></svg>
    <svg viewBox="0 0 22 20"><path d="M1 7h4l4-4v14l-4-4H1zM12 7q2 3 0 6M15 5q3 5 0 10M18 3q5 7 0 14" fill="none" stroke="#fff" stroke-width="1.300"/></svg>
    <span class="lang">DEU</span>
    <time class="clock"><span>13:12</span><span>17.11.2019</span></time>
    <button class="note" aria-label="Notifications"><svg viewBox="0 0 20 20"><path d="M0 1h20v15H9l-4 4v-4H0z" fill="#fff"/><path d="M4 5h12M4 8.500h12M4 12h7" stroke="#2d2a2b" stroke-width="1.500"/></svg><b class="badge">18</b></button>
  </div>
</div>
</body>
</html>
```

FILE: styles.css
```css
* { box-sizing: border-box; }
body {
  margin: 0;
  min-height: 100vh;
  padding-bottom: 46px;
  display: flex;
  flex-direction: column;
  background: #fff;
  color: #1c1c1c;
  font: 14px/18px "Noto Sans", "Open Sans", sans-serif;
}
button {
  font: inherit;
  color: inherit;
  background: none;
  border: 0;
  padding: 0;
  white-space: nowrap;
}
svg { display: block; flex: none; }
.sprite { position: absolute; width: 0; height: 0; }
.i20 { width: 20px; height: 20px; }
.i18 { width: 18px; height: 18px; }
.caret { width: 10px; height: 6px; }
button:disabled { color: #a0a0a0; }

/* title bar */
.titlebar { display: flex; align-items: center; height: 29px; padding: 0 3px 0 2px; }
.titlebar h1 { margin: 0 0 0 5px; font-size: 14px; font-weight: 400; color: #000; }
.winbtns { margin-left: auto; display: flex; }
.winbtns button { width: 59px; height: 28px; display: grid; place-items: center; }
.winbtns svg { width: 12px; height: 12px; fill: none; stroke: #000; }

/* toolbars */
.bar {
  display: flex;
  height: 30px;
  background: #efefef;
  border-bottom: 1px solid #a4a4a4;
  border-top: 1px solid #fbfbfb;
}
.menu { height: 31px; align-items: center; gap: 14px; }
.menu .grip { margin-right: -4px; }
.last { border-bottom: 0; }
.grip { flex: none; width: 3px; height: 22px; margin: 3px 6px 0 3px; border-right: 1px solid #999; border-bottom: 1px solid #999; }
.group { display: flex; border-right: 1px solid #999; padding-right: 5px; margin-right: 1px; }
.group + .group { border-left: 1px solid #fff; }
.group.open { border-right: 0; }
.t { width: 30px; height: 28px; display: flex; align-items: center; justify-content: center; flex: none; }
.t.wide { width: 39px; gap: 1px; }
.t.on { background: #f9f9f9; border: 1px solid #fff; border-top-color: #999; border-left-color: #999; width: 28px; margin-right: 2px; }
.sep { flex: none; width: 1px; height: 22px; margin: 3px 5px 0 4px; background: #999; }
.labels { display: flex; gap: 16px; padding: 0 10px 0 6px; }
.l { display: flex; align-items: center; gap: 2px; height: 28px; }
.labels.undo { gap: 20px; padding-left: 4px; }
.undo .l { gap: 0; }
.blend .caret { margin: 0 -6px 0 5px; }
.caption { width: 49px; line-height: 28px; margin-left: -3px; }
.edges { align-items: center; }
.edges .grip { margin-right: 8px; margin-top: 0; }
.d { display: flex; align-items: center; gap: 4px; width: 41px; padding-left: 2px; }
.d b { font-size: 12px; line-height: 12px; font-weight: 600; color: #444; margin: 8px -4px 0 -12px; width: 8px; }
.combo { display: flex; align-items: center; width: 118px; height: 22px; margin: 3px 6px 0 6px; padding-right: 3px; background: #fff; }
.combo select { flex: 1; min-width: 0; height: 22px; appearance: none; border: 0; background: none; padding: 0 3px; font: inherit; font-size: 13px; color: #111; }
.combo.off { width: 120px; margin-right: 3px; background: #f5f5f5; color: #aaa; }
.combo.off select { color: #a0a0a0; opacity: 1; }

/* panels */
.work { flex: 1; display: flex; gap: 6px; background: #fbfbfb; padding-bottom: 7px; }
.side { width: 472px; flex: none; display: flex; flex-direction: column; gap: 7px; }
.head {
  display: flex;
  align-items: center;
  justify-content: space-between;
  margin: 0;
  height: 27px;
  padding: 0 5px;
  font-size: 14px;
  font-weight: 400;
  background: linear-gradient(90deg, #c0cedd, #d8e5f1);
  border-bottom: 2px solid #858a8c;
}
.head.active { color: #fff; background: linear-gradient(90deg, #9bb5d6, #b9d1ec); }
.pin { width: 10px; height: 12px; color: #000; }
.active .pin { color: #fff; }
.outline { border-right: 2px solid #f4f4f4; }
.tree {
  margin: 0;
  padding: 0 0 35px;
  list-style: none;
  background: #fff;
  border-left: 2px solid #888;
  border-bottom: 3px solid #858585;
  display: grid;
  grid-auto-rows: 1fr;
  height: 330px;
}
.tree li { display: flex; align-items: center; }
.tree .n1 { padding-left: 33px; }
.twig, .rail { --dots: #999 0 1px, transparent 1px 2px; width: 34px; align-self: stretch; flex: none; display: flex; align-items: center; }
.rail { background: repeating-linear-gradient(to bottom, var(--dots)) 17px 0 / 1px 100% no-repeat; }
.rail.none { background: none; }
.twig {
  background:
    repeating-linear-gradient(to right, var(--dots)) 17px 55% / 17px 1px no-repeat,
    repeating-linear-gradient(to bottom, var(--dots)) 17px 0 / 1px 100% no-repeat;
}
.twig.end {
  background:
    repeating-linear-gradient(to right, var(--dots)) 17px 55% / 17px 1px no-repeat,
    repeating-linear-gradient(to bottom, var(--dots)) 17px 0 / 1px 55% no-repeat;
}
.twig.root { background: repeating-linear-gradient(to right, var(--dots)) 17px 55% / 17px 1px no-repeat; width: 33px; }
.pm { width: 14px; height: 14px; border: 1px solid #777; background: linear-gradient(#333, #333) center / 8px 1px no-repeat #fff; margin: 2px 0 0 10px; }
.pm.sm { display: block; width: 11px; height: 11px; margin: 0 0 0 3px; background-size: 5px 1px; }
.st { width: 9px; height: 9px; margin: 9px 1px 0 1px; }
.nm { margin-left: 4px; padding: 0 1px; border: 1px solid transparent; }
.nm.sel { border: 1px dotted #000; }
.tabs { display: flex; height: 28px; background: #eee; border-left: 2px solid #888; padding-left: 5px; align-items: flex-start; }
.tabs button { height: 25px; padding: 2px 5px 0; border-bottom: 2px solid #888; }
.tabs .cur { height: 27px; margin-top: -1px; padding: 4px 9px 0; background: #f0f0f0; border-right: 2px solid #888; }
.details { flex: 1; display: flex; flex-direction: column; border-right: 2px solid #f4f4f4; }
.sheet { flex: 1; background: #fff; border-left: 2px solid #888; border-bottom: 1px solid #ddd; }
table { width: 100%; height: 271px; border-collapse: collapse; table-layout: fixed; font-size: 13px; }
.c0 { width: 17px; }
.c1 { width: 135px; }
td, th { padding: 0 4px; font-weight: 400; text-align: left; border: 1px solid #999; line-height: 18px; white-space: nowrap; }
td:first-child { border: 0; padding: 0; }
th.sec { font-weight: 600; }
.ro { background: #e6e5e2; }
.fd { display: flex; align-items: center; gap: 5px; }
.fd input { appearance: none; width: 15px; height: 15px; margin: 0; border: 1px solid #bbb; background: #fff; flex: none; }

.graphics { flex: 1; min-width: 0; display: flex; flex-direction: column; padding-right: 2px; }
.graphics .head { border-bottom-color: #7d8878; padding-left: 4px; padding-right: 4px; }
.canvas { flex: 1; position: relative; overflow: hidden; border-left: 2px solid #777; border-right: 1px solid #eee; border-bottom: 3px solid #808080; background: #fff; }
.canvas svg { position: absolute; inset: 0; width: 100%; height: 100%; }
.brand { fill: #fff; text-anchor: end; }
.brand1 { font-size: 32px; font-weight: 700; }
.brand2 { font-size: 20px; }
.ruler { font: 16px "Liberation Sans", Arial, sans-serif; }
.view { height: 27px; padding-left: 2px; }
.view button { border: 2px solid #888; border-top-width: 1px; height: 25px; padding: 2px 5px 0; margin-top: -1px; }
.view .cur { height: 26px; padding: 5px 7px 0 8px; border-top: 0; border-left: 0; margin-top: 0; }

/* status line */
.status { display: flex; align-items: center; height: 25px; background: #efefef; border-top: 1px solid #999; border-left: 1px solid #999; padding-left: 11px; }
.ready { margin-left: 15px; }
.picked { margin-left: auto; margin-right: 355px; }
.cell { width: 54px; height: 24px; padding: 2px; margin-right: 3px; border-top: 1px solid #999; border-left: 1px solid #999; }
.units { width: 191px; display: flex; gap: 10px; }
.size { width: 18px; height: 18px; align-self: flex-end; }

/* taskbar */
.taskbar { display: flex; height: 50px; background: #2c2a2b; color: #fff; }
.start { width: 60px; display: grid; place-items: center; background: #1f1f1f; }
.start svg { width: 20px; height: 20px; }
.search { width: 431px; display: flex; align-items: center; gap: 14px; padding-left: 15px; background: #f1f1f1; border: 1px solid #bbb; border-left: 0; }
.search svg { width: 20px; height: 20px; }
.search input { flex: 1; min-width: 0; border: 0; background: none; padding: 0; font: 18px/24px "Noto Sans", sans-serif; }
.search input::placeholder { color: #2b2b2b; opacity: 1; }
.app { width: 62px; display: flex; align-items: center; justify-content: center; position: relative; }
.app svg { width: 28px; height: 28px; }
.run { background: linear-gradient(#7fb3e2, #7fb3e2) center bottom / 51px 3px no-repeat; }
.split { background: linear-gradient(90deg, #7fb3e2 0 40px, #5a7f9f 40px) center bottom / 51px 3px no-repeat; }
.here { background: linear-gradient(#7fb3e2, #7fb3e2) center bottom / 100% 3px no-repeat #676566; }
.face { width: 100%; height: 100%; display: grid; place-items: center; }
.badge { position: absolute; display: grid; place-items: center; width: 22px; height: 22px; border: 1px solid #999; border-radius: 50%; background: #363435; font: 14px/20px "Noto Sans", sans-serif; }
.mail .badge { left: 36px; top: 24px; }
.preview { position: absolute; bottom: 100%; left: 50%; width: 270px; height: 180px; margin-left: -135px; padding: 10px 10px 0; background: linear-gradient(#555657, #4a4b4c 25%, #5c5c5c); box-shadow: 0 0 6px rgba(0, 0, 0, .35); }
.ptitle { display: flex; gap: 10px; height: 30px; font-size: 14px; line-height: 22px; white-space: nowrap; }
.preview .i20 { width: 20px; height: 20px; }
.preview .thumb { width: 100%; height: 130px; }
.tray { margin-left: auto; display: flex; align-items: center; gap: 10px; font-size: 15px; padding-right: 5px; }
.tray svg { width: 20px; height: 20px; }
.tray .plug { width: 12px; margin: 0 1px 0 -1px; }
.pct { width: 64px; height: 24px; border: 2px solid #fff; background: #10a63a; font-size: 15px; line-height: 20px; text-align: center; }
.lang { width: 30px; font-size: 14px; text-align: center; }
.clock { display: grid; width: 84px; text-align: center; font-size: 14px; line-height: 23px; }
.note { position: relative; width: 50px; height: 50px; border-right: 1px solid #666; padding-left: 5px; }
.note .badge { left: 13px; top: 23px; }
```
